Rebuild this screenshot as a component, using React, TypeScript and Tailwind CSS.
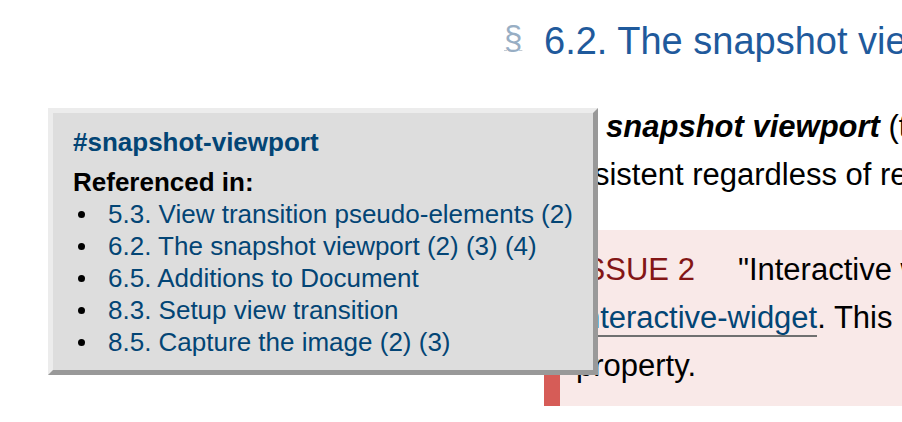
import React from "react";

const refs: string[] = [
  "5.3. View transition pseudo-elements (2)",
  "6.2. The snapshot viewport (2) (3) (4)",
  "6.5. Additions to Document",
  "8.3. Setup view transition",
  "8.5. Capture the image (2) (3)",
];

export default function App() {
  return (
    <div className="relative w-[902px] h-[422px] overflow-hidden bg-white text-black font-['Liberation_Sans',Arial,sans-serif]">
      <div className="pl-[544px] pt-[16px] whitespace-nowrap">
        <h3 className="-ml-[40px] text-[38px] leading-[44px] text-[#1f5a9c] font-normal">
          <span className="inline-block w-[40px] text-[33px] align-[5px] text-[#98aec4]">
            <span className="underline decoration-[#c4ccd4] decoration-1 underline-offset-[1px]">§</span>
          </span>
          6.2. The snapshot viewport
        </h3>

        <p className="mt-[40px] mb-[31px] text-[31px] leading-[48px]">
          The <b className="italic font-bold">snapshot viewport</b> (the viewport
          <br />
          consistent regardless of rendering
        </p>

        <div className="border-l-[16px] border-[#d65c57] bg-[#f9e9e8] py-[16px] pl-[16px] text-[31px] leading-[48px]">
          <span className="text-[#831616] mr-[43px]">ISSUE 2</span>
          "Interactive widgets"
          <br />
          <span className="text-[#034575] border-b-2 border-[#707070]">interactive-widget</span>. This is
          <br />
          property.
        </div>
      </div>

      <div className="absolute left-[48px] top-[108px] w-[550px] bg-[#dddddd] border-[5px] border-t-[#ececec] border-l-[#ececec] border-b-[#999999] border-r-[#999999] pt-[13px] pb-[12px] px-[20px] text-[26px] leading-[32px] whitespace-nowrap">
        <div className="font-bold text-[#034575]">#snapshot-viewport</div>
        <div className="mt-[8px] font-bold text-black">Referenced in:</div>
        <ul>
          {refs.map((r) => (
            <li key={r} className="flex items-center">
              <span className="ml-[5px] mr-[23px] w-[7px] h-[7px] rounded-full bg-black shrink-0" />
              <span className="text-[#034575]">{r}</span>
            </li>
          ))}
        </ul>
      </div>
    </div>
  );
}
